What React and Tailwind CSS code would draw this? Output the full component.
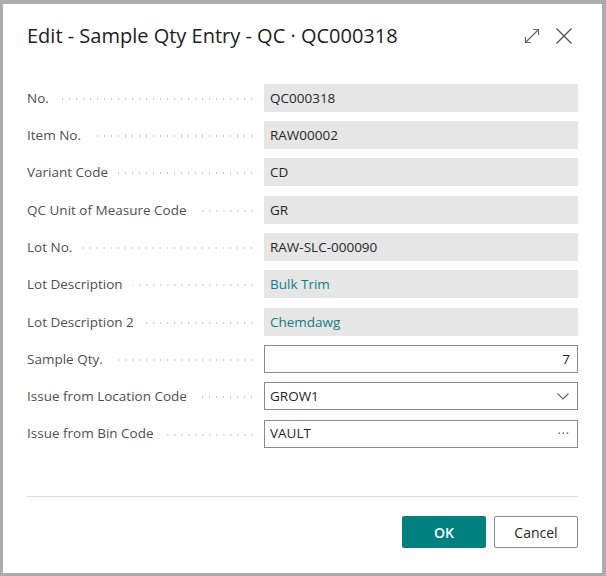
import React from 'react';

// read-only fields get a grey box, editable ones a bordered white box
const fields = [
  { label: 'No.', value: 'QC000318', kind: 'read' },
  { label: 'Item No.', value: 'RAW00002', kind: 'read' },
  { label: 'Variant Code', value: 'CD', kind: 'read' },
  { label: 'QC Unit of Measure Code', value: 'GR', kind: 'read' },
  { label: 'Lot No.', value: 'RAW-SLC-000090', kind: 'read' },
  { label: 'Lot Description', value: 'Bulk Trim', kind: 'link' },
  { label: 'Lot Description 2', value: 'Chemdawg', kind: 'link' },
  { label: 'Sample Qty.', value: '7', kind: 'number' },
  { label: 'Issue from Location Code', value: 'GROW1', kind: 'select' },
  { label: 'Issue from Bin Code', value: 'VAULT', kind: 'lookup' },
];

function ExpandIcon() {
  return (
    <svg width="18" height="18" viewBox="0 0 18 18" fill="none" stroke="#666" strokeWidth="1.2">
      <path d="M2.5 15.5L15.5 2.5M10 2.5h5.5V8M2.5 10v5.5H8" />
    </svg>
  );
}

function CloseIcon() {
  return (
    <svg width="18" height="18" viewBox="0 0 18 18" fill="none" stroke="#555" strokeWidth="1.4">
      <path d="M1.5 1.5l15 15M16.5 1.5l-15 15" />
    </svg>
  );
}

function Chevron() {
  return (
    <svg width="14" height="14" viewBox="0 0 14 14" fill="none" stroke="#666" strokeWidth="1.1">
      <path d="M1.5 4.5L7 10l5.5-5.5" />
    </svg>
  );
}

function FieldBox({ field }) {
  if (field.kind === 'read' || field.kind === 'link') {
    return (
      <div
        className={`h-[28px] bg-[#e6e6e6] flex items-center px-[6px] ${
          field.kind === 'link' ? 'text-[#0d7d86]' : 'text-[#262626]'
        }`}
      >
        {field.value}
      </div>
    );
  }
  return (
    <div className="h-[28px] border border-[#8a8a8a] bg-white flex items-center pl-[5px] pr-[7px] text-[#262626]">
      {field.kind === 'number' ? (
        <span className="flex-1 text-right">{field.value}</span>
      ) : (
        <span className="flex-1">{field.value}</span>
      )}
      {field.kind === 'select' && <Chevron />}
      {field.kind === 'lookup' && <span className="text-[#555] text-[12px] tracking-[1px]">···</span>}
    </div>
  );
}

export default function App() {
  return (
    <div
      className="w-[606px] h-[576px] bg-[#acacac] pt-[4px] pl-[3px] pr-[4px] pb-[3px]"
      style={{ fontFamily: '"Open Sans", "Noto Sans", sans-serif' }}
    >
      <div className="h-full bg-white flex flex-col px-[24px]">
        {/* Header */}
        <div className="h-[62px] flex items-center justify-between pt-[1px]">
          <h1 className="text-[20px] text-[#212121]">Edit - Sample Qty Entry - QC · QC000318</h1>
          <div className="flex items-center gap-[14px] pr-[5px]">
            <ExpandIcon />
            <CloseIcon />
          </div>
        </div>

        {/* Fields */}
        <div className="pt-[13px] flex flex-col text-[13.5px]">
          {fields.map((f) => (
            <div key={f.label} className="h-[37.33px] flex items-center">
              <div className="w-[237px] flex items-center pr-[9px]">
                <span className="text-[#505050] whitespace-nowrap">{f.label}</span>
                <span className="flex-1 ml-[10px] h-[4px] mt-[2px] bg-[radial-gradient(circle,#c4c4c4_0.7px,transparent_1.1px)] bg-[length:7px_4px] bg-repeat-x bg-right" />
              </div>
              <div className="flex-1">
                <FieldBox field={f} />
              </div>
            </div>
          ))}
        </div>

        {/* Footer */}
        <div className="mt-[44px] border-t border-[#dcdcdc]" />
        <div className="flex justify-end gap-[8px] pt-[19px]">
          <button className="w-[84px] h-[32px] rounded-[2px] bg-[#00807f] text-white font-semibold text-[14px]">OK</button>
          <button className="w-[84px] h-[32px] rounded-[2px] border border-[#8a8a8a] bg-white text-[#262626] text-[14px]">Cancel</button>
        </div>
      </div>
    </div>
  );
}
